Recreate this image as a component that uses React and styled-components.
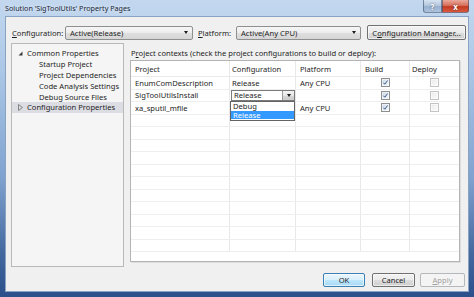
import React from "react";
import styled, { createGlobalStyle } from "styled-components";

const Global = createGlobalStyle`
  html, body { margin: 0; padding: 0; }
  body {
    width: 474px; height: 297px; overflow: hidden;
    font-family: "Noto Sans", "Open Sans", sans-serif;
    font-size: 7.6px; color: #1e1e1e;
  }
  * { box-sizing: border-box; }
`;

const Window = styled.div`
  width: 474px; height: 297px;
  display: flex; flex-direction: column;
  padding: 0 5px 5px 5px;
  background: linear-gradient(180deg, #c3d8ef 0%, #aac6e6 25%, #7fa2cf 60%, #44699f 85%, #2b4f8a 100%);
`;

const TitleBar = styled.div`
  height: 16px; display: flex; align-items: flex-start;
`;

const Title = styled.div`
  flex: 1; line-height: 16px; color: #1b2636; font-size: 7.2px;
  text-shadow: 0 0 4px rgba(255,255,255,0.9);
`;

const CaptionButton = styled.div`
  height: 13px; width: ${p => p.$w}px;
  display: flex; align-items: center; justify-content: center;
  color: #fff; font-weight: bold; font-size: 8px;
  border: 1px solid rgba(60, 80, 110, 0.6);
  border-top: none;
  border-radius: ${p => p.$r};
  background: ${p => p.$close
    ? "linear-gradient(180deg, #e9a99b 0%, #d8705d 45%, #c23b22 55%, #d9593f 100%)"
    : "linear-gradient(180deg, #d6e3f1 0%, #b5c8de 45%, #98b1cf 55%, #aec4de 100%)"};
  text-shadow: 0 0 2px rgba(0,0,0,0.6);
`;

const Client = styled.div`
  flex: 1; display: flex; flex-direction: column;
  background: #f0f0f0;
  border: 1px solid #8aa3c2;
`;

const TopRow = styled.div`
  display: flex; align-items: center;
  margin-top: 8px; height: 15px; padding-left: 6px;
`;

const Label = styled.div`
  width: ${p => p.$w}px; margin-left: ${p => p.$ml || 0}px;
  u { text-decoration: underline; }
`;

const Combo = styled.div`
  width: ${p => p.$w}px; height: 14px;
  display: flex; align-items: center; justify-content: space-between;
  padding: 0 4px 0 4px;
  border: 1px solid #8e8f8f; border-radius: 2px;
  background: linear-gradient(180deg, #f6f6f6 0%, #ececec 50%, #dfdfdf 51%, #d6d6d6 100%);
`;

const Arrow = styled.span`
  width: 0; height: 0;
  border-left: 2.5px solid transparent; border-right: 2.5px solid transparent;
  border-top: 3px solid #1a1a1a;
`;

const Button = styled.div`
  width: ${p => p.$w}px; height: ${p => p.$h || 14}px;
  margin-left: ${p => p.$ml || 0}px;
  display: flex; align-items: center; justify-content: center;
  border-radius: 2px;
  border: 1px solid ${p => p.$disabled ? "#b5b8bb" : p.$default ? "#3c7fb1" : "#707070"};
  color: ${p => p.$disabled ? "#a0a0a0" : "#1e1e1e"};
  background: ${p => p.$disabled
    ? "#f4f4f4"
    : p.$default
      ? "linear-gradient(180deg, #eaf6fd 0%, #d9f0fc 50%, #bee6fd 51%, #a7d9f5 100%)"
      : "linear-gradient(180deg, #f2f2f2 0%, #ebebeb 50%, #dddddd 51%, #cfcfcf 100%)"};
  box-shadow: inset 0 0 0 1px ${p => p.$disabled ? "transparent" : "rgba(255,255,255,0.6)"};
`;

const Main = styled.div`
  display: flex; margin-top: 3px; height: 224px;
`;

const Tree = styled.div`
  width: 113px; margin-left: 5px; height: 224px;
  background: #f5f5f5; border: 1px solid #b9b9b9;
  padding-top: 4px;
`;

const TreeRow = styled.div`
  height: 10.8px; display: flex; align-items: center;
  padding-left: ${p => p.$indent}px;
  background: ${p => p.$selected ? "#dcdde3" : "transparent"};
`;

const Toggle = styled.span`
  width: 9px; display: inline-flex; align-items: center;
`;

const RightPane = styled.div`
  width: 330px; margin-left: 6px; display: flex; flex-direction: column;
`;

const Caption = styled.div`
  padding-top: 6px; line-height: 9px; height: 15px; padding-left: 1px;
  margin-bottom: 2px; white-space: nowrap;
`;

const Grid = styled.div`
  height: 202px; background: #fff;
  border: 1px solid #b4b4b4;
  box-shadow: 1px 1px 0 #dcdcdc;
  display: flex; flex-direction: column;
  position: relative;
`;

const cols = "99px 66px 65px 49px 1fr";

const HeaderRow = styled.div`
  display: grid; grid-template-columns: ${cols};
  height: 16px; border-bottom: 1px solid #e9e9e9;
  flex-shrink: 0;
`;

const BodyRow = styled.div`
  display: grid; grid-template-columns: ${cols};
  height: 12.5px; border-bottom: 1px solid #eeeeee;
  flex-shrink: 0;
`;

const Cell = styled.div`
  position: relative;
  display: flex; align-items: center;
  justify-content: ${p => p.$center ? "center" : "flex-start"};
  padding-left: ${p => p.$center ? 0 : p.$pl ?? 4}px;
  border-right: ${p => p.$last ? "none" : "1px solid #e8e8e8"};
  white-space: nowrap;
`;

const InCombo = styled.div`
  width: 64px; height: 11px; margin-left: 1px;
  display: flex; border: 1px solid #7b7b7b; background: #fff;
`;

const InComboText = styled.div`
  flex: 1; padding-left: 2px; display: flex; align-items: center;
`;

const InComboBtn = styled.div`
  width: 12px; display: flex; align-items: center; justify-content: center;
  border-left: 1px solid #9a9a9a;
  background: linear-gradient(180deg, #f4f4f4 0%, #e6e6e6 50%, #d8d8d8 51%, #cdcdcd 100%);
`;

const DropList = styled.div`
  position: absolute; left: 0; top: 100%;
  width: 65px; z-index: 3;
  background: #fff; border: 1px solid #646464;
  padding: 0 0 1px 0;
`;

const DropItem = styled.div`
  height: 8.5px; display: flex; align-items: center; padding-left: 2px;
  background: ${p => p.$selected ? "#3399ff" : "transparent"};
  color: ${p => p.$selected ? "#fff" : "#1e1e1e"};
`;

const Footer = styled.div`
  display: flex; justify-content: flex-end; align-items: center;
  margin-top: 6px; height: 14px; padding-right: 3px;
`;

const CheckBox = ({ checked }) => (
  <svg width="9" height="9" viewBox="0 0 9 9">
    <defs>
      <linearGradient id={checked ? "cbOn" : "cbOff"} x1="0" y1="0" x2="1" y2="1">
        <stop offset="0" stopColor={checked ? "#cdd9e8" : "#ececec"} />
        <stop offset="1" stopColor={checked ? "#f3f6fa" : "#fafafa"} />
      </linearGradient>
    </defs>
    <rect x="0.5" y="0.5" width="8" height="8" fill="#fff" stroke={checked ? "#8e8f8f" : "#c4c4c4"} />
    <rect x="1.5" y="1.5" width="6" height="6" fill={`url(#${checked ? "cbOn" : "cbOff"})`} />
    {checked && (
      <path d="M2.4 4.7 L3.8 6.2 L6.6 2.5" fill="none" stroke="#3a5a88" strokeWidth="1" />
    )}
  </svg>
);

const Expanded = () => (
  <svg width="5" height="5" viewBox="0 0 5 5"><path d="M4.5 0.5 L4.5 4.5 L0.5 4.5 Z" fill="#3c3c3c" /></svg>
);
const Collapsed = () => (
  <svg width="5" height="7" viewBox="0 0 5 7"><path d="M0.5 0.5 L4.5 3.5 L0.5 6.5 Z" fill="none" stroke="#7a7a7a" strokeWidth="0.9" /></svg>
);

const rows = [
  { project: "EnumComDescription", config: "Release", platform: "Any CPU", build: true },
  { project: "SigToolUtilsInstall", combo: true, platform: "", build: true },
  { project: "xa_sputil_mfile", config: "", platform: "Any CPU", build: true },
];

export default function App() {
  const empty = Array.from({ length: 11 });
  return (
    <>
      <Global />
      <Window>
        <TitleBar>
          <Title>Solution 'SigToolUtils' Property Pages</Title>
          <CaptionButton $w={19} $r="0 0 0 3px">?</CaptionButton>
          <CaptionButton $w={27} $r="0 0 3px 0" $close>x</CaptionButton>
        </TitleBar>
        <Client>
          <TopRow>
            <Label $w={53}><u>C</u>onfiguration:</Label>
            <Combo $w={128}>Active(Release)<Arrow /></Combo>
            <Label $w={38} $ml={5}><u>P</u>latform:</Label>
            <Combo $w={125}>Active(Any CPU)<Arrow /></Combo>
            <Button $w={99} $h={15} $ml={6}>C<u>o</u>nfiguration Manager...</Button>
          </TopRow>
          <Main>
            <Tree>
              <TreeRow $indent={6}><Toggle><Expanded /></Toggle>Common Properties</TreeRow>
              <TreeRow $indent={27}>Startup Project</TreeRow>
              <TreeRow $indent={27}>Project Dependencies</TreeRow>
              <TreeRow $indent={27}>Code Analysis Settings</TreeRow>
              <TreeRow $indent={27}>Debug Source Files</TreeRow>
              <TreeRow $indent={6} $selected><Toggle><Collapsed /></Toggle>Configuration Properties</TreeRow>
            </Tree>
            <RightPane>
              <Caption>P<u>r</u>oject contexts (check the project configurations to build or deploy):</Caption>
              <Grid>
                <HeaderRow>
                  <Cell>Project</Cell>
                  <Cell $pl={2}>Configuration</Cell>
                  <Cell>Platform</Cell>
                  <Cell $pl={4}>Build</Cell>
                  <Cell $pl={2} $last>Deploy</Cell>
                </HeaderRow>
                {rows.map((r, i) => (
                  <BodyRow key={i}>
                    <Cell>{r.project}</Cell>
                    <Cell $pl={r.combo ? 0 : 2}>
                      {r.combo ? (
                        <>
                          <InCombo>
                            <InComboText>Release</InComboText>
                            <InComboBtn><Arrow /></InComboBtn>
                          </InCombo>
                          <DropList>
                            <DropItem>Debug</DropItem>
                            <DropItem $selected>Release</DropItem>
                          </DropList>
                        </>
                      ) : r.config}
                    </Cell>
                    <Cell>{r.platform}</Cell>
                    <Cell $center><CheckBox checked={r.build} /></Cell>
                    <Cell $center $last><CheckBox checked={false} /></Cell>
                  </BodyRow>
                ))}
                {empty.map((_, i) => (
                  <BodyRow key={"e" + i}>
                    <Cell /><Cell /><Cell /><Cell /><Cell $last />
                  </BodyRow>
                ))}
              </Grid>
            </RightPane>
          </Main>
          <Footer>
            <Button $w={42} $default>OK</Button>
            <Button $w={43} $ml={7}>Cancel</Button>
            <Button $w={45} $ml={5} $disabled><u>A</u>pply</Button>
          </Footer>
        </Client>
      </Window>
    </>
  );
}
